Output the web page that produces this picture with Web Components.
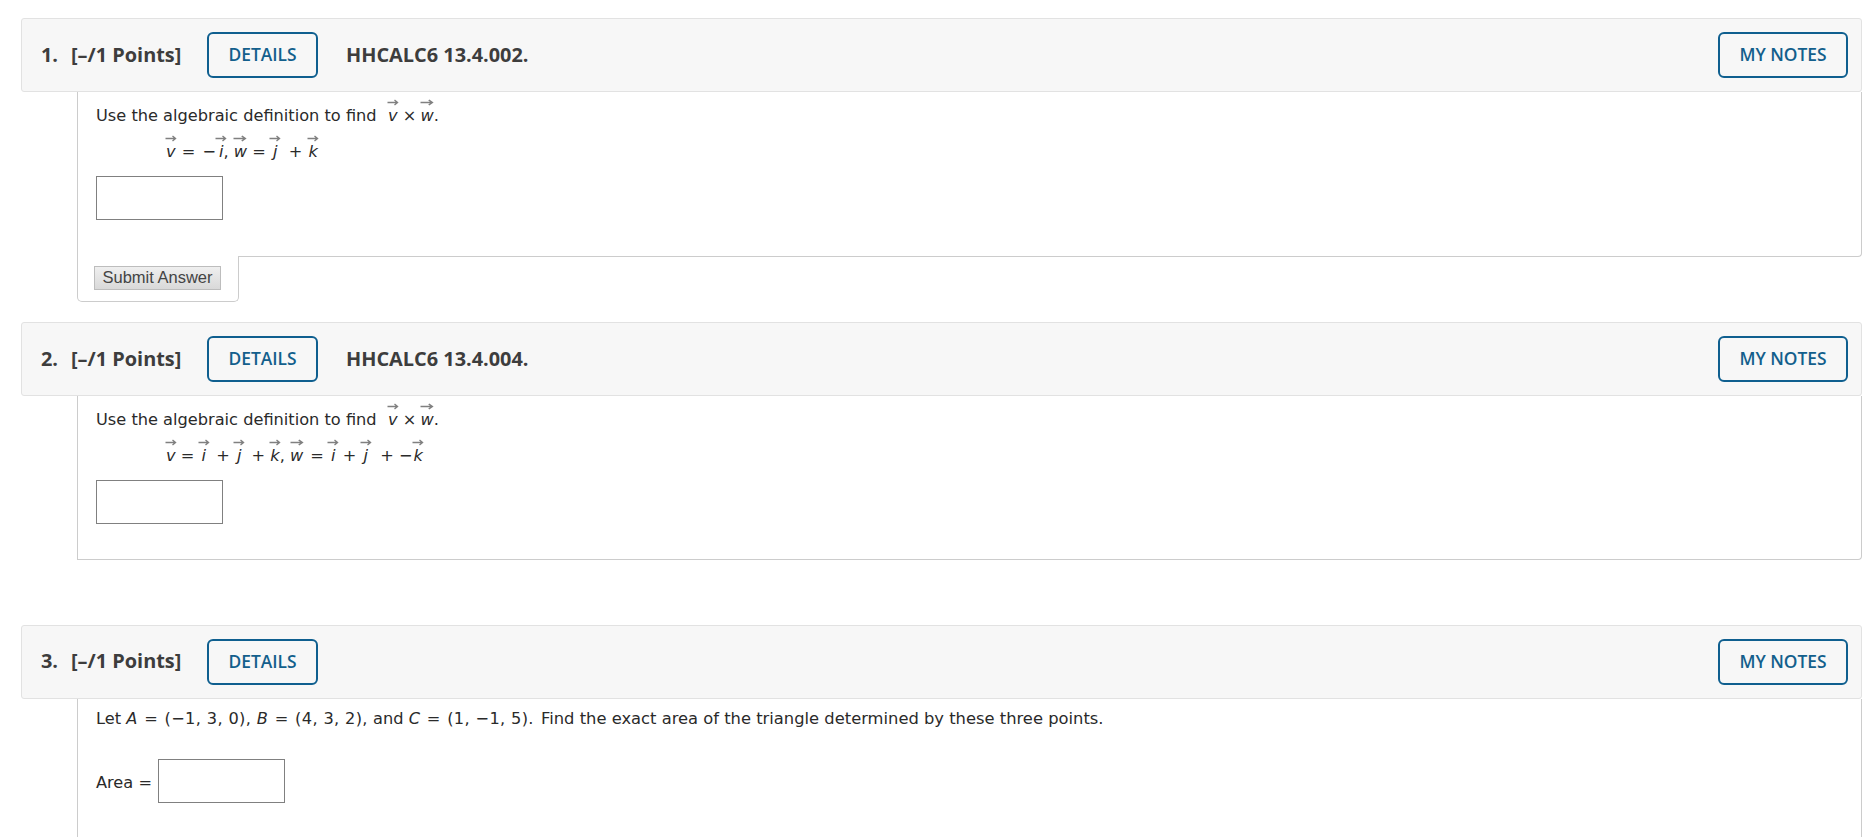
<!DOCTYPE html>
<html lang="en">
<head>
<meta charset="utf-8">
<title>Questions</title>
<style>
	html, body { margin: 0; background: #fff; height: 100%; overflow: hidden; }
	body { font-family: "DejaVu Sans", Verdana, sans-serif; }
	.page { padding: 18px 9px 0 21px; }
	wa-question + wa-question { margin-top: 20.5px; }
	wa-question.spaced { margin-top: 65px; }
	.math { margin: 17px 0 0 70px; }
	.gap { margin-top: 15px; }
	.op { margin: 0 2px; }
	.tight { margin: 0 1px; }
	.m { letter-spacing: .35px; }
</style>
</head>
<body>

<template id="btn-tpl">
	<style>
		:host { display: inline-flex; }
		.btn {
			display: flex; align-items: center; justify-content: center;
			box-sizing: border-box; height: 46px; width: var(--w, 111px); padding-bottom: 2px;
			border: 2px solid #0f5f8f; border-radius: 6px;
			font: 600 17.4px "Open Sans", sans-serif; color: #135f8c;
		}
	</style>
	<div class="btn"><slot></slot></div>
</template>

<template id="question-tpl">
	<style>
		:host { display: block; color: #2a2a2a; }
		.head {
			display: flex; align-items: center; box-sizing: border-box; height: 74px;
			padding: 0 13px 0 19px;
			background: #f7f7f7; border: 1px solid #e2e2e2; border-radius: 3px;
			font: 700 19.9px "Open Sans", sans-serif; color: #3d3d3d;
		}
		.num, .pts, .code { padding-bottom: 2px; }
		.num { width: 30px; }
		.pts { width: 136px; }
		.code { margin-left: 28px; flex: 1; }
		.body {
			margin-left: 56px; box-sizing: border-box; padding: var(--pad, 14px) 15px 0 18px;
			min-height: var(--body-h, 164.5px);
			background: #fff; border: 1px solid #ccc; border-top: 0; border-radius: 0 0 4px 0;
			font-size: 16.2px; position: relative;
		}
		.tab {
			display: none; margin-left: 56px; margin-top: -1px; box-sizing: border-box;
			width: 162px; height: 46px; padding: 10px 0 0 16px;
			background: #fff; border: 1px solid #ccc; border-top: 0; border-radius: 0 0 5px 5px;
			position: relative;
		}
		:host([submit]) .tab { display: block; }
		/* hides the body's bottom rule over the tab */
		:host([submit]) .tab::before {
			content: ""; position: absolute; left: 0; right: 0; top: -1px; height: 2px; background: #fff;
		}
		.submit {
			box-sizing: border-box; height: 24px; width: 127px; padding: 0;
			background: linear-gradient(#efefef, #d9d9d9); border: 1px solid #bdbdbd; border-radius: 0;
			font: 16.5px "Liberation Sans", Arial, sans-serif; color: #444;
		}
	</style>
	<div class="head">
		<span class="num"><slot name="num"></slot></span>
		<span class="pts">[–/1 Points]</span>
		<wa-button>DETAILS</wa-button>
		<span class="code"><slot name="code"></slot></span>
		<wa-button style="--w:130px">MY NOTES</wa-button>
	</div>
	<div class="body"><slot></slot></div>
	<div class="tab"><button class="submit" tabindex="-1">Submit Answer</button></div>
</template>

<template id="vec-tpl">
	<style>
		:host { display: inline-block; position: relative; font-style: italic; }
		svg { position: absolute; left: 50%; top: -7px; width: 11px; height: 7px; transform: translateX(-50%); overflow: visible; }
		:host([wide]) svg { width: 13px; }
	</style>
	<slot></slot>
	<svg viewBox="0 0 11 7" preserveAspectRatio="none" fill="none" stroke="#808080" stroke-width="1.4">
		<path d="M0 3.5H10M7 1l3 2.5L7 6"/>
	</svg>
</template>

<template id="field-tpl">
	<style>
		:host { display: inline-block; vertical-align: middle; }
		.f { box-sizing: border-box; width: 127px; height: 44px; border: 1px solid #808080; background: #fff; }
	</style>
	<div class="f"></div>
</template>

<div class="page">
	<wa-question submit style="--body-h:164.5px">
		<span slot="num">1.</span>
		<span slot="code">HHCALC6 13.4.002.</span>
		<div>Use the algebraic definition to find &nbsp;<wa-vec style="margin-left:1px">v</wa-vec> <span>×</span> <wa-vec wide style="margin-left:-1px">w</wa-vec>.</div>
		<div class="math"><wa-vec>v</wa-vec> <span class="tight">=</span> <span style="margin:0 3px 0 1px">−</span><wa-vec>i</wa-vec>, <wa-vec wide>w</wa-vec> <span style="margin:0 2px 0 0">=</span> <wa-vec>j</wa-vec> <span style="margin:0 1px 0 6px">+</span> <wa-vec>k</wa-vec></div>
		<div class="gap"><wa-field></wa-field></div>
	</wa-question>

	<wa-question style="--body-h:163.5px">
		<span slot="num">2.</span>
		<span slot="code">HHCALC6 13.4.004.</span>
		<div>Use the algebraic definition to find &nbsp;<wa-vec style="margin-left:1px">v</wa-vec> <span>×</span> <wa-vec wide style="margin-left:-1px">w</wa-vec>.</div>
		<div class="math"><wa-vec>v</wa-vec> <span style="margin:0 2px 0 0">=</span> <wa-vec>i</wa-vec> <span style="margin:0 2px 0 5px">+</span> <wa-vec>j</wa-vec> <span style="margin:0 0 0 5px">+</span> <wa-vec>k</wa-vec>, <wa-vec wide>w</wa-vec> <span class="op">=</span> <wa-vec>i</wa-vec> <span style="margin:0 2px">+</span> <wa-vec>j</wa-vec> <span style="margin:0 0 0 7px">+</span>&thinsp;<span style="margin:0 1px 0 2px">−</span><wa-vec>k</wa-vec></div>
		<div class="gap"><wa-field></wa-field></div>
	</wa-question>

	<wa-question class="spaced" style="--body-h:200px;--pad:10px">
		<span slot="num">3.</span>
		<div>Let <span class="m"><i>A</i> <span class="tight">=</span> (−1, 3, 0), <i>B</i> <span class="tight">=</span> (4, 3, 2),</span> and <span class="m"><i>C</i> <span class="tight">=</span> (1, −1, 5).</span> <span style="font-size:16.33px;margin-left:2px">Find the exact area of the triangle determined by these three points.</span></div>
		<div style="margin-top:31px">Area = <wa-field style="margin-left:1px;vertical-align:-14.7px"></wa-field></div>
	</wa-question>
</div>

<script>
	// every element just stamps its template into an open shadow root
	function define(tag, tplId) {
		customElements.define(tag, class extends HTMLElement {
			constructor() {
				super();
				var root = this.attachShadow({mode: 'open'});
				root.appendChild(document.getElementById(tplId).content.cloneNode(true));
			}
		});
	}
	define('wa-button', 'btn-tpl');
	define('wa-question', 'question-tpl');
	define('wa-vec', 'vec-tpl');
	define('wa-field', 'field-tpl');
</script>
</body>
</html>
